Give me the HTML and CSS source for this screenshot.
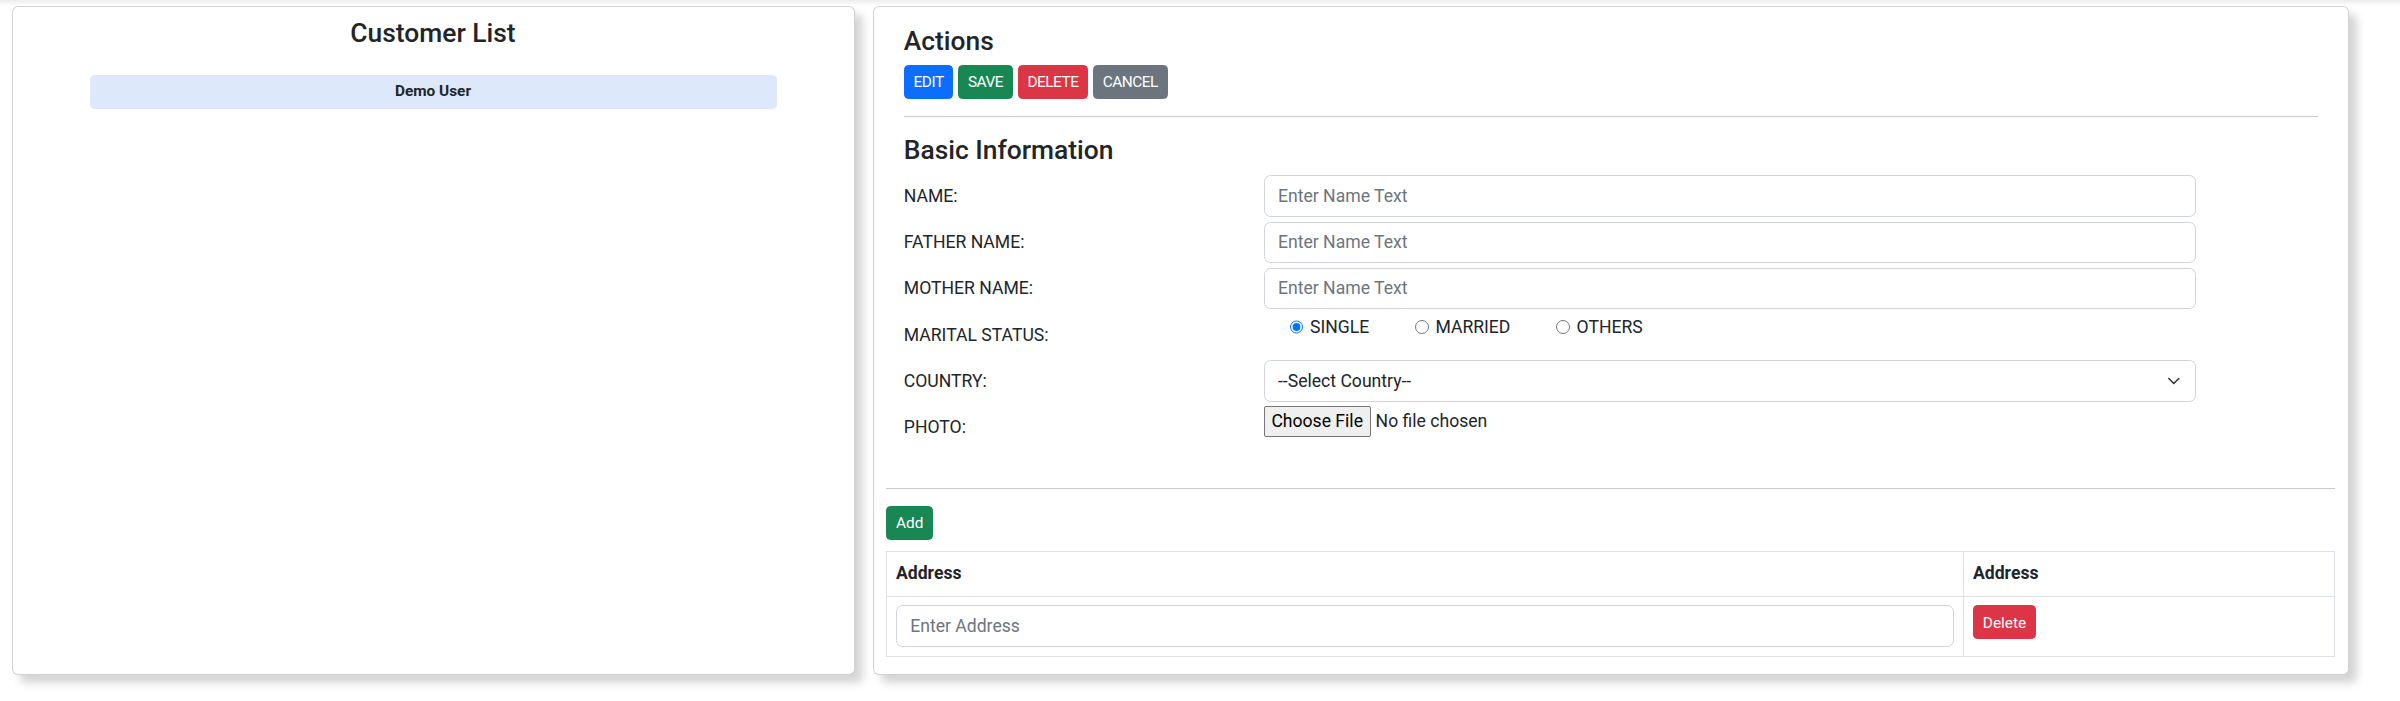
FILE: index.html
```html
<!DOCTYPE html>
<html lang="en">
<head>
<meta charset="utf-8">
<title>Customers</title>
<link rel="stylesheet" href="styles.css">
</head>
<body>
<div class="page">
  <aside class="card list-card">
    <h4 class="list-title">Customer List</h4>
    <div class="list-item">Demo User</div>
  </aside>
  <main class="card detail-card">
    <section class="upper">
      <h4 class="heading heading-actions">Actions</h4>
      <div class="actions">
        <button class="btn btn-primary">EDIT</button>
        <button class="btn btn-success">SAVE</button>
        <button class="btn btn-danger">DELETE</button>
        <button class="btn btn-secondary">CANCEL</button>
      </div>
      <hr class="rule rule-top">
      <h4 class="heading">Basic Information</h4>
      <div class="form">
        <label class="lbl">NAME:</label>
        <div class="ctl"><input class="field" type="text" placeholder="Enter Name Text"></div>
        <label class="lbl">FATHER NAME:</label>
        <div class="ctl"><input class="field" type="text" placeholder="Enter Name Text"></div>
        <label class="lbl">MOTHER NAME:</label>
        <div class="ctl"><input class="field" type="text" placeholder="Enter Name Text"></div>
        <label class="lbl">MARITAL STATUS:</label>
        <div class="ctl radios">
          <label class="radio-opt"><input type="radio" name="ms" checked><span>SINGLE</span></label>
          <label class="radio-opt"><input type="radio" name="ms"><span>MARRIED</span></label>
          <label class="radio-opt"><input type="radio" name="ms"><span>OTHERS</span></label>
        </div>
        <label class="lbl">COUNTRY:</label>
        <div class="ctl select-wrap">
          <select class="field select">
            <option>--Select Country--</option>
          </select>
          <svg class="chev" viewBox="0 0 16 16" aria-hidden="true"><path d="m2 5 6 6 6-6" fill="none" stroke="#343a40" stroke-width="2" stroke-linecap="round" stroke-linejoin="round"/></svg>
        </div>
        <label class="lbl">PHOTO:</label>
        <div class="ctl"><input class="file" type="file"></div>
      </div>
    </section>
    <hr class="rule rule-bottom">
    <button class="btn btn-success add">Add</button>
    <table class="addr">
      <colgroup><col class="col-main"><col></colgroup>
      <thead>
        <tr><th>Address</th><th>Address</th></tr>
      </thead>
      <tbody>
        <tr>
          <td><input class="field" type="text" placeholder="Enter Address"></td>
          <td><button class="btn btn-danger">Delete</button></td>
        </tr>
      </tbody>
    </table>
  </main>
</div>
</body>
</html>
```

FILE: styles.css
```css
* { box-sizing: border-box; }
html, body { margin: 0; }
body {
  font-family: Roboto, "Liberation Sans", sans-serif;
  font-size: 17.6px;
  line-height: 1.5;
  color: #212529;
  background: linear-gradient(#ececec, #ffffff 6px) no-repeat, #ffffff;
  height: 701px;
  overflow: hidden;
}
.page {
  display: grid;
  grid-template-columns: 843px 1476.3px;
  column-gap: 18.2px;
  padding: 6px 0 0 11.5px;
  align-items: stretch;
}
.card {
  background: #fff;
  border: 1px solid rgba(0, 0, 0, 0.175);
  border-radius: 6px;
  box-shadow: 8px 8px 8px rgba(0, 0, 0, 0.17);
}
.list-card { padding: 11.4px 0 0; }
.list-title {
  margin: 0 0 24.9px;
  font-size: 26.4px;
  line-height: 31.68px;
  font-weight: 500;
  text-align: center;
}
.list-item {
  margin: 0 77px;
  background: #dde8fb;
  border-radius: 4.4px;
  text-align: center;
  font-weight: 700;
  font-size: 15.4px;
  line-height: 23.1px;
  padding: 5.5px;
}
.detail-card { padding: 0 12.5px; }
.upper { padding: 19.1px 17.6px 17.6px; }
.heading {
  margin: 0 0 8.7px;
  font-size: 26.4px;
  line-height: 31.68px;
  font-weight: 500;
}
.heading-actions { margin-bottom: 7.2px; }
.actions { display: flex; gap: 4.8px; }
.actions .btn { letter-spacing: -0.5px; }
.btn {
  display: inline-block;
  font-family: inherit;
  font-size: 15.4px;
  line-height: 23.1px;
  padding: 5.4px 8.8px 3.4px;
  border: 1px solid transparent;
  border-radius: 4.4px;
  color: #fff;
  cursor: pointer;
}
.btn-primary { background: #0d6efd; border-color: #0d6efd; }
.btn-success { background: #198754; border-color: #198754; }
.btn-danger { background: #dc3545; border-color: #dc3545; }
.btn-secondary { background: #6c757d; border-color: #6c757d; }
.rule {
  border: 0;
  border-top: 1px solid #c9cacc;
  height: 0;
}
.rule-top { margin: 17.6px 0; }
.rule-bottom { margin: 22px 0 17px; }
.form {
  display: grid;
  grid-template-columns: 360px 932px;
  row-gap: 4.4px;
  align-items: start;
}
.lbl {
  padding: 7.7px 0;
  line-height: 26.4px;
}
.field {
  display: block;
  width: 100%;
  font-family: inherit;
  font-size: 17.6px;
  line-height: 26.4px;
  padding: 6.6px 13.2px;
  border: 1px solid #ced4da;
  border-radius: 6.6px;
  color: #212529;
  background: #fff;
}
.field::placeholder { color: #6c757d; opacity: 1; }
.select-wrap { position: relative; }
.select {
  appearance: none;
  -webkit-appearance: none;
  padding-right: 39.6px;
}
.chev {
  position: absolute;
  right: 13.2px;
  top: 50%;
  width: 17.6px;
  height: 13.2px;
  transform: translateY(-50%);
  pointer-events: none;
}
.radios {
  display: flex;
  align-items: center;
  gap: 46px;
  padding-left: 26px;
  height: 26.4px;
}
.radio-opt {
  display: flex;
  align-items: center;
  gap: 6.7px;
  line-height: 26.4px;
}
.radio-opt input {
  width: 13.5px;
  height: 13.5px;
  margin: 0;
}
.file {
  font-family: inherit;
  font-size: 17.6px;
  line-height: 26.4px;
  color: #212529;
}
.file::file-selector-button {
  font-family: inherit;
  font-size: 17.6px;
  line-height: 26.4px;
  padding: 1.1px 6.6px;
  border: 1px solid #767676;
  border-radius: 2px;
  background: #efefef;
  color: #000;
  margin-right: 5px;
}
.add { display: block; margin-bottom: 11px; }
.addr {
  width: 100%;
  border-collapse: collapse;
  table-layout: fixed;
  margin-bottom: 17.6px;
}
.col-main { width: 1077px; }
.addr th, .addr td {
  border: 1px solid #dee2e6;
  padding: 8.8px;
  text-align: left;
  vertical-align: top;
  line-height: 26.4px;
}
.addr th { font-weight: 700; }
.addr .btn { display: block; }
```
